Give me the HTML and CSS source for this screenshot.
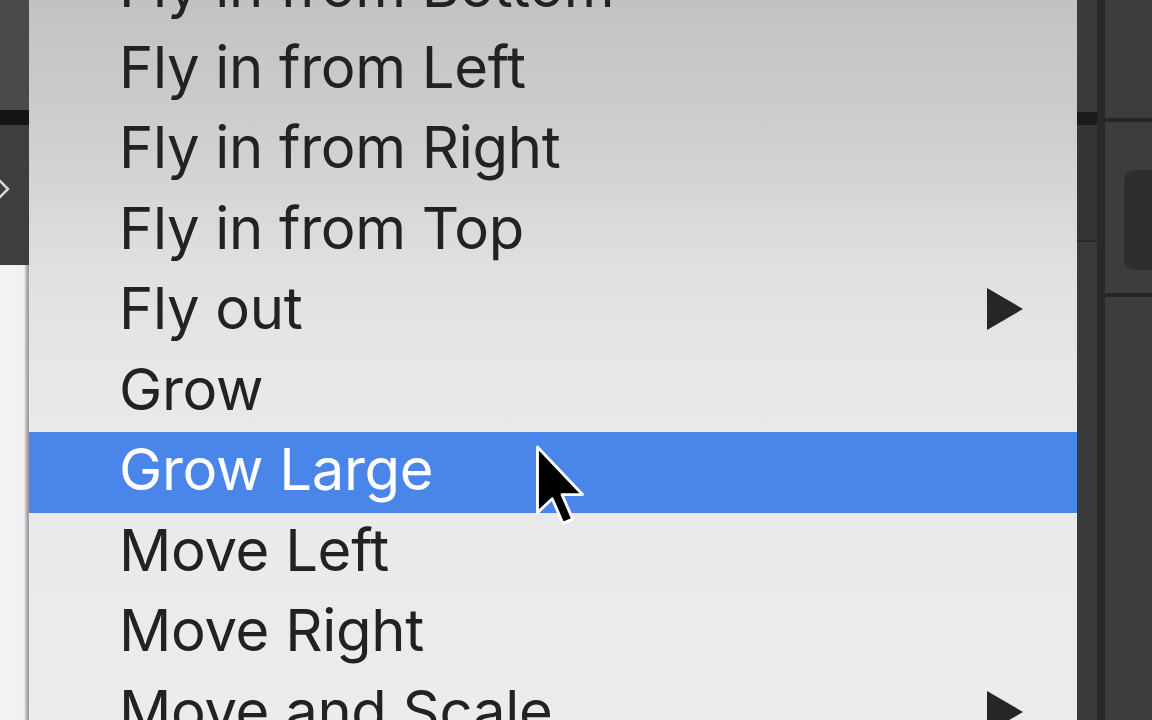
FILE: index.html
```html
<!DOCTYPE html>
<html>
<head>
<meta charset="utf-8">
<link rel="stylesheet" href="styles.css">
</head>
<body>
<div class="screen">
  <div class="left-strip">
    <div class="ls-top"></div>
    <div class="ls-band"></div>
    <div class="ls-mid">
      <svg class="chev" width="12" height="48" viewBox="0 0 12 48"><polyline points="-6,10 8,24 -6,38" fill="none" stroke="#d8d8d8" stroke-width="2.5"/></svg>
    </div>
    <div class="ls-light"></div>
  </div>
  <div class="menu">
    <ul class="items">
      <li class="item">Fly in from Bottom</li>
      <li class="item">Fly in from Left</li>
      <li class="item">Fly in from Right</li>
      <li class="item">Fly in from Top</li>
      <li class="item has-sub">Fly out<span class="arrow"></span></li>
      <li class="item">Grow</li>
      <li class="item selected">Grow Large</li>
      <li class="item">Move Left</li>
      <li class="item">Move Right</li>
      <li class="item has-sub">Move and Scale<span class="arrow"></span></li>
    </ul>
  </div>
  <div class="right-strip">
    <div class="rs-a">
      <div class="rsa-top"></div>
      <div class="rsa-band"></div>
      <div class="rsa-mid"></div>
      <div class="rsa-bot"></div>
    </div>
    <div class="rs-b"></div>
    <div class="rs-c">
      <div class="rsc-top"></div>
      <div class="rsc-line"></div>
      <div class="rsc-panel"><div class="rsc-box"></div></div>
      <div class="rsc-line"></div>
      <div class="rsc-bot"></div>
    </div>
  </div>
  <svg class="cursor" width="54" height="86" viewBox="-1 -1 13 21">
    <path d="M0,0 L0,16 L3.6,12.6 L6.2,18.6 L8.6,17.6 L6,11.6 L11,11.6 Z" fill="#000" stroke="#fff" stroke-width="0.7" stroke-linejoin="round"/>
  </svg>
</div>
</body>
</html>
```
FILE: styles.css
```css
html, body {
  margin: 0;
  padding: 0;
  background: #3c3c3e;
}
.screen {
  position: relative;
  width: 1152px;
  height: 720px;
  overflow: hidden;
  display: flex;
  font-family: Inter, "Liberation Sans", sans-serif;
}
.left-strip {
  width: 29px;
  flex: none;
  display: flex;
  flex-direction: column;
}
.ls-top { height: 110px; background: #4a4a4c; }
.ls-band { height: 15px; background: #141415; }
.ls-mid {
  height: 140px;
  background: #3e3e40;
  display: flex;
  align-items: flex-start;
  padding-top: 40px;
  box-sizing: border-box;
}
.chev { display: block; }
.ls-light {
  flex: 1;
  background: linear-gradient(90deg, #f4f4f6 0, #f0f0f2 24px, #a9a9ab 27px, #9a9a9c 29px);
}
.menu {
  width: 1048px;
  flex: none;
  background: linear-gradient(180deg, #c2c2c5 0, #cfcfd2 140px, #dfdfe1 260px, #e8e8ea 380px, #ececee 720px);
}
.items {
  list-style: none;
  margin: -51px 0 0;
  padding: 0;
}
.item {
  position: relative;
  height: 80.5px;
  box-sizing: border-box;
  padding: 0 0 6.5px 90px;
  line-height: 74px;
  font-size: 58px;
  color: #222224;
  white-space: nowrap;
  letter-spacing: -0.3px;
}
.item.selected {
  background: #4a86e9;
  color: #ffffff;
}
.arrow {
  position: absolute;
  left: 958px;
  top: 17px;
  width: 0;
  height: 0;
  border-top: 21px solid transparent;
  border-bottom: 21px solid transparent;
  border-left: 36px solid #262628;
}
.right-strip {
  flex: 1;
  display: flex;
}
.rs-a {
  width: 20px;
  display: flex;
  flex-direction: column;
}
.rsa-top { height: 112px; background: #3a3a3c; }
.rsa-band { height: 13px; background: #1a1a1b; }
.rsa-mid { height: 115px; background: #343436; border-bottom: 2px solid #2a2a2c; }
.rsa-bot { flex: 1; background: #3a3a3c; }
.rs-b { width: 8px; background: #29292b; }
.rs-c {
  flex: 1;
  display: flex;
  flex-direction: column;
  background: #3d3d3f;
}
.rsc-top { height: 118px; }
.rsc-line { height: 4px; background: #262628; }
.rsc-panel {
  height: 171px;
  padding: 48px 0 0 19px;
  box-sizing: border-box;
}
.rsc-box {
  height: 100px;
  border-radius: 10px 0 0 10px;
  background: #2e2e30;
}
.rsc-bot { flex: 1; }
.cursor {
  position: absolute;
  left: 533px;
  top: 443px;
}
```
